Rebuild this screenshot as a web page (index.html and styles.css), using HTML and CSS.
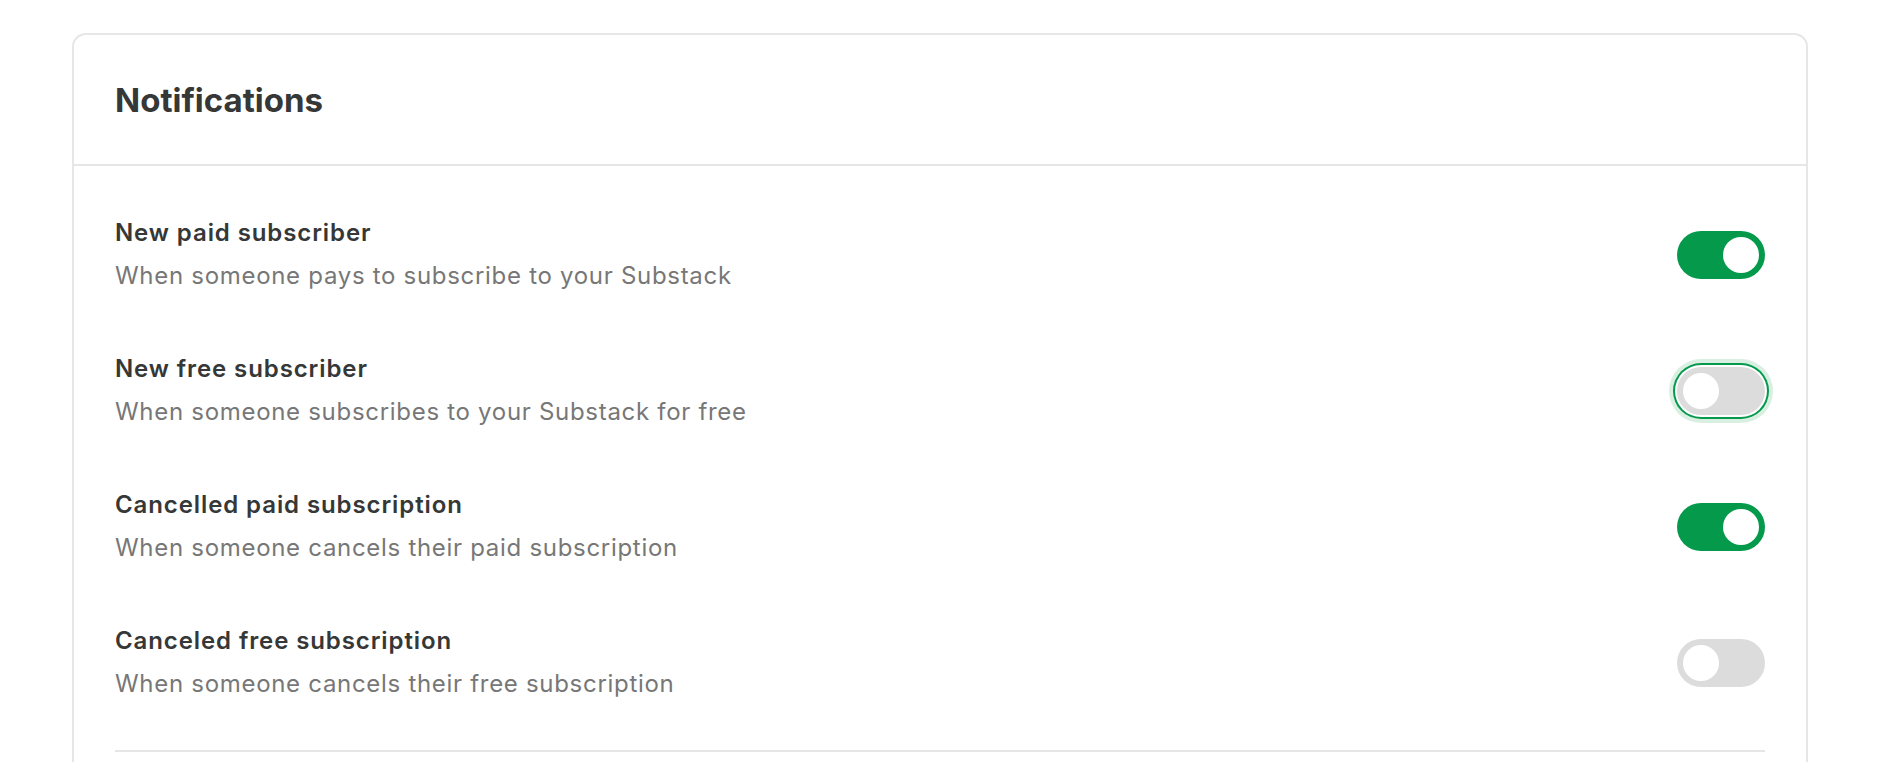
FILE: index.html
```html
<!DOCTYPE html>
<html lang="en">
<head>
<meta charset="utf-8">
<title>Notifications</title>
<link rel="stylesheet" href="styles.css">
</head>
<body>
<section class="card">
  <header class="card-header">
    <h2 class="card-title">Notifications</h2>
  </header>
  <div class="card-body">
    <ul class="settings">
      <li class="setting">
        <div class="setting-text">
          <div class="setting-title">New paid subscriber</div>
          <div class="setting-desc">When someone pays to subscribe to your Substack</div>
        </div>
        <span class="toggle on" role="switch" aria-checked="true"><span class="knob"></span></span>
      </li>
      <li class="setting">
        <div class="setting-text">
          <div class="setting-title">New free subscriber</div>
          <div class="setting-desc">When someone subscribes to your Substack for free</div>
        </div>
        <span class="toggle focused" role="switch" aria-checked="false"><span class="knob"></span></span>
      </li>
      <li class="setting">
        <div class="setting-text">
          <div class="setting-title">Cancelled paid subscription</div>
          <div class="setting-desc">When someone cancels their paid subscription</div>
        </div>
        <span class="toggle on" role="switch" aria-checked="true"><span class="knob"></span></span>
      </li>
      <li class="setting">
        <div class="setting-text">
          <div class="setting-title">Canceled free subscription</div>
          <div class="setting-desc">When someone cancels their free subscription</div>
        </div>
        <span class="toggle" role="switch" aria-checked="false"><span class="knob"></span></span>
      </li>
    </ul>
    <hr class="divider">
  </div>
</section>
</body>
</html>
```

FILE: styles.css
```css
* { box-sizing: border-box; }
html, body { background: #ffffff; }
body {
  margin: 0;
  padding: 33px 86px 0 72px;
  font-family: Inter, "Noto Sans", "Liberation Sans", sans-serif;
  color: #363737;
}
.card {
  border: 2px solid #e6e6e6;
  border-radius: 14px;
  background: #fff;
  min-height: 800px;
}
.card-header {
  height: 131px;
  display: flex;
  align-items: center;
  padding: 0 41px;
  border-bottom: 2px solid #e6e6e6;
}
.card-title {
  margin: 0;
  font-size: 33px;
  font-weight: 700;
  letter-spacing: 0;
  color: #363737;
}
.card-body {
  padding: 20px 41px 0;
}
.settings {
  list-style: none;
  margin: 0;
  padding: 0;
}
.setting {
  display: flex;
  align-items: center;
  justify-content: space-between;
  padding: 32px 0 31px;
}
.setting-text {
  display: flex;
  flex-direction: column;
  gap: 13px;
}
.setting-title {
  font-size: 24px;
  line-height: 30px;
  font-weight: 600;
  letter-spacing: 0.9px;
  color: #363737;
}
.setting-desc {
  font-size: 24px;
  line-height: 30px;
  font-weight: 400;
  letter-spacing: 0.7px;
  color: #777777;
}
.toggle {
  position: relative;
  flex: none;
  width: 88px;
  height: 48px;
  border-radius: 24px;
  background: #dcdcdc;
}
.toggle .knob {
  position: absolute;
  top: 6px;
  left: 6px;
  width: 36px;
  height: 36px;
  border-radius: 50%;
  background: #ffffff;
}
.toggle.on { background: #05994c; }
.toggle.on .knob { left: 46px; }
.toggle.focused {
  box-shadow: 0 0 0 2px #ffffff, 0 0 0 4px #05994c, 0 0 0 8px #d9efe2;
}
.divider {
  margin: 20px 0 0;
  border: 0;
  border-top: 2px solid #e6e6e6;
  height: 0;
}
```
